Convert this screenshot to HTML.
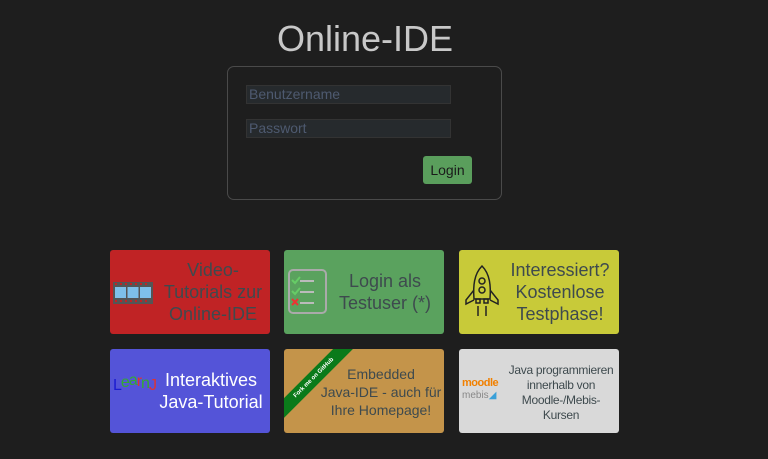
<!DOCTYPE html>
<html><head><meta charset="utf-8"><style>
body{margin:0;width:768px;height:459px;background:#1e1e1e;font-family:"Liberation Sans",sans-serif;position:relative;overflow:hidden}
.t{position:absolute;left:0;width:730px;text-align:center;top:18px;font-size:36px;color:#c8c8c8}
.box{position:absolute;left:227px;top:66px;width:273px;height:132px;border:1px solid #4a4a4a;border-radius:7px}
.in{position:absolute;left:246px;width:201px;height:17px;background:#262a2d;border:1px solid #333;color:#4e5a70;font-size:14px;line-height:17px;padding-left:2px;box-sizing:content-box}
.btn{position:absolute;left:423px;top:156px;width:49px;height:28px;background:#5a9e5c;border-radius:3px;color:#1a1a1a;font-size:14px;line-height:28px;text-align:center}
.tile{position:absolute;width:160px;height:84px;border-radius:3px;overflow:hidden}
.tx{position:absolute;text-align:center;color:#3e4a4e;white-space:nowrap}
</style></head><body>
<div class="t">Online-IDE</div>
<div class="box"></div>
<div class="in" style="top:85px">Benutzername</div>
<div class="in" style="top:119px">Passwort</div>
<div class="btn">Login</div>

<div class="tile" style="left:110px;top:250px;background:#c02325">
<svg style="position:absolute;left:3px;top:32px" width="40" height="22"><rect x="0" y="0" width="40" height="22" fill="#555"/><rect x="2" y="5" width="11" height="11" fill="#7ec0ea"/><rect x="14.5" y="5" width="11" height="11" fill="#7ec0ea"/><rect x="27" y="5" width="11" height="11" fill="#7ec0ea"/><g fill="#c02325"><rect x="2" y="1" width="2" height="2"/><rect x="7" y="1" width="2" height="2"/><rect x="12" y="1" width="2" height="2"/><rect x="17" y="1" width="2" height="2"/><rect x="22" y="1" width="2" height="2"/><rect x="27" y="1" width="2" height="2"/><rect x="32" y="1" width="2" height="2"/><rect x="2" y="18" width="2" height="2"/><rect x="7" y="18" width="2" height="2"/><rect x="12" y="18" width="2" height="2"/><rect x="17" y="18" width="2" height="2"/><rect x="22" y="18" width="2" height="2"/><rect x="27" y="18" width="2" height="2"/><rect x="32" y="18" width="2" height="2"/></g></svg>
<div class="tx" style="left:48px;width:110px;top:9px;font-size:18px;line-height:22px">Video-<br>Tutorials zur<br>Online-IDE</div></div>

<div class="tile" style="left:284px;top:250px;background:#5aa25e">
<svg style="position:absolute;left:4px;top:19px" width="40" height="46" fill="none" stroke="#aaa" stroke-width="2"><rect x="1" y="1" width="37" height="43" rx="4"/><path d="M12 12h14M12 23h14M12 34h14" stroke="#bbb"/><path d="M4 11l3 3 5-6M4 22l3 3 5-6" stroke="#6c6"/><path d="M4 30l6 6M10 30l-6 6" stroke="#e33"/></svg>
<div class="tx" style="left:46px;width:110px;top:20px;font-size:18px;line-height:22px">Login als<br>Testuser (*)</div></div>

<div class="tile" style="left:459px;top:250px;background:#c8ca39">
<svg style="position:absolute;left:2px;top:14px" width="42" height="58" fill="none" stroke="#222" stroke-width="1.5"><path d="M21 2c-8 8-9 20-8 33h16c1-13 0-25-8-33z"/><circle cx="21" cy="17" r="3"/><circle cx="21" cy="26" r="3"/><path d="M13 26l-8 10v4l8-4M29 26l8 10v4l-8-4"/><rect x="15" y="35" width="4" height="4"/><rect x="23" y="35" width="4" height="4"/><path d="M17 42v10M25 42v10"/></svg>
<div class="tx" style="left:44px;width:114px;top:9px;font-size:18px;line-height:22px">Interessiert?<br>Kostenlose<br>Testphase!</div></div>

<div class="tile" style="left:110px;top:349px;background:#5454d8">
<div style="position:absolute;left:3px;top:28px;font-size:16px;font-family:'Liberation Sans';letter-spacing:-1px"><span style="color:#1b1bd0">L</span><span style="color:#3a3;position:relative;top:-3px">e</span><span style="color:#3a3;position:relative;top:-5px">a</span><span style="color:#d33;position:relative;top:-4px">r</span><span style="color:#3a3;position:relative;top:-2px">n</span><span style="color:#d33">J</span></div>
<div class="tx" style="left:42px;width:118px;top:20px;font-size:18px;line-height:22px;color:#fff">Interaktives<br>Java-Tutorial</div></div>

<div class="tile" style="left:284px;top:349px;background:#c4944a">
<div class="tx" style="left:34px;width:126px;top:16px;font-size:14px;line-height:18px">Embedded<br>Java-IDE - auch für<br>Ihre Homepage!</div>
<div style="position:absolute;left:-30px;top:22px;width:120px;height:14px;background:#0a7a1a;transform:rotate(-45deg);color:#fff;font-size:6px;line-height:14px;text-align:center;font-weight:bold">Fork me on GitHub</div></div>

<div class="tile" style="left:459px;top:349px;background:#d9d9d9">
<div style="position:absolute;left:3px;top:28px;font-size:11px;font-weight:bold;color:#f18000;letter-spacing:-0.5px">moodle</div>
<div style="position:absolute;left:3px;top:41px;font-size:10px;color:#888">mebis<span style="color:#3aa0d8">◢</span></div>
<div class="tx" style="left:46px;width:112px;top:14px;font-size:12px;line-height:15px;letter-spacing:-0.3px">Java programmieren<br>innerhalb von<br>Moodle-/Mebis-<br>Kursen</div></div>
</body></html>
